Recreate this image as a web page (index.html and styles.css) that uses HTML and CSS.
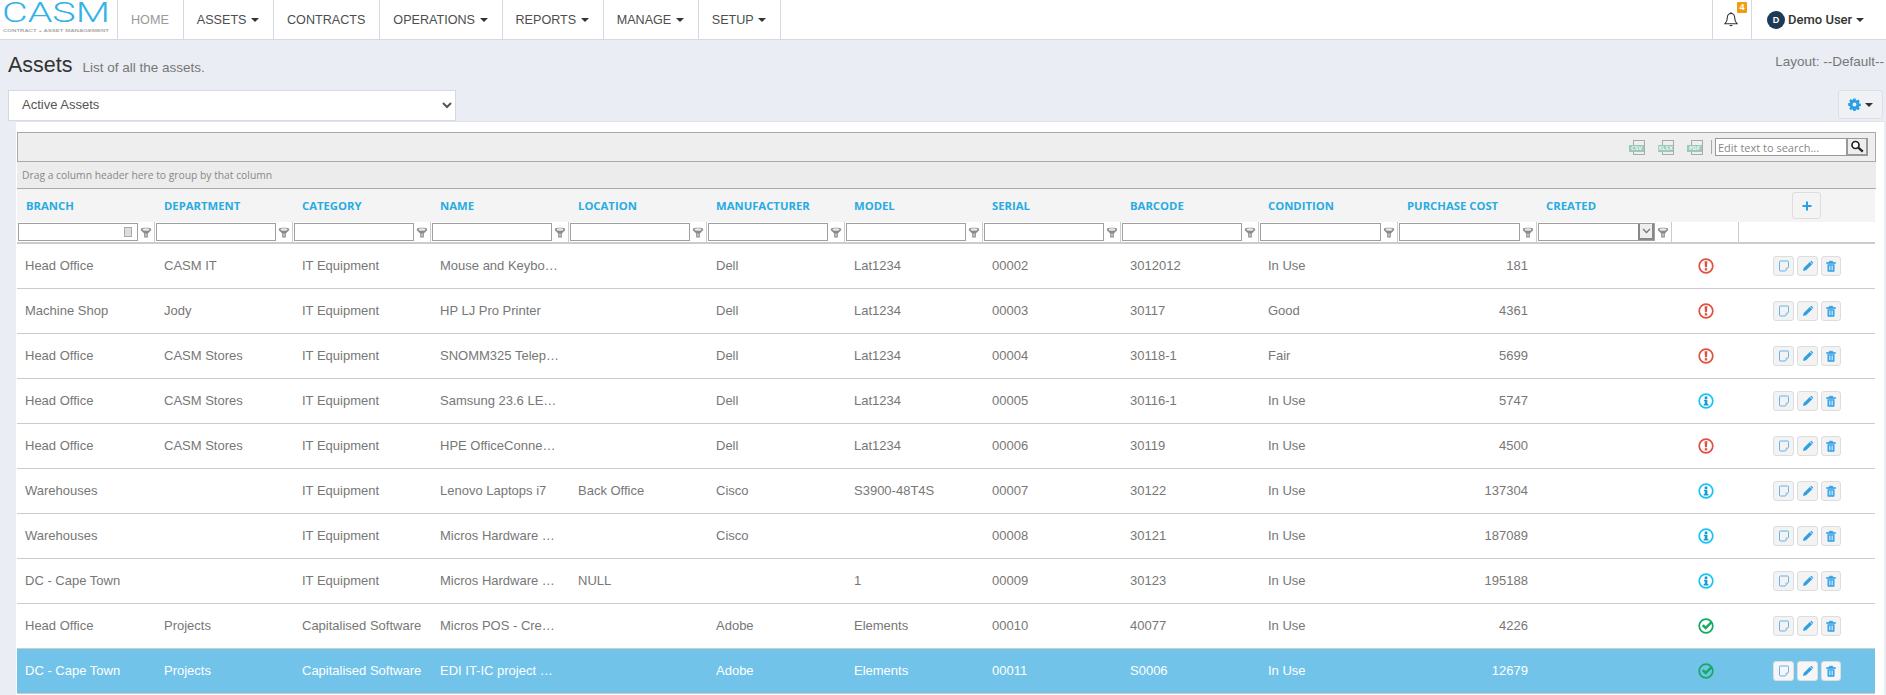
FILE: index.html
```html
<!DOCTYPE html>
<html lang="en">
<head>
<meta charset="utf-8">
<title>Assets</title>
<link rel="stylesheet" href="styles.css">
</head>
<body>
<svg class="defs" width="0" height="0" aria-hidden="true">
  <symbol id="i-note" viewBox="0 0 12 12"><path d="M1.500 2.200A1 1 0 0 1 2.500 1h7a1 1 0 0 1 1 1.200v5L7.400 11H2.500a1 1 0 0 1-1-1z" fill="none" stroke="currentColor" stroke-width="1"/><path d="M7.500 10.500V8.200A.7.7 0 0 1 8.200 7.500h2.200z" fill="#b5c9dd"/></symbol>
  <symbol id="i-pencil" viewBox="0 0 12 12"><path d="M1 11l.7-3L7.800 1.900l2.400 2.400L4 10.300z" fill="currentColor"/><path d="M8.500 1.200a1 1 0 0 1 1.400 0l1 1a1 1 0 0 1 0 1.400l-.2.200-2.400-2.400z" fill="currentColor"/></symbol>
  <symbol id="i-trash" viewBox="0 0 12 12"><path d="M1.500 2.500h9v1h-9zM4.300 2.500V1.200h3.400v1.300" fill="currentColor" stroke="currentColor" stroke-width=".6"/><path d="M2.500 4.200h7V11a.7.7 0 0 1-.7.700H3.200a.7.7 0 0 1-.7-.7z" fill="currentColor"/><path d="M4.400 5.500v4.800M6 5.500v4.800M7.600 5.500v4.800" stroke="#fff" stroke-width=".7"/></symbol>
  <symbol id="i-alert" viewBox="0 0 16 16"><circle cx="8" cy="8" r="6.800" fill="none" stroke="#e0503f" stroke-width="1.700"/><path d="M6.600 3.300h2.800l-.4 6H7z" fill="#e0503f"/><rect x="6.800" y="10.200" width="2.400" height="2.300" fill="#e0503f"/></symbol>
  <symbol id="i-info" viewBox="0 0 16 16"><circle cx="8" cy="8" r="6.800" fill="none" stroke="#18c5f2" stroke-width="1.700"/><circle cx="8" cy="4.700" r="1.500" fill="#1a9ad0"/><path d="M5.900 6.700h3.500V11h1v1.400H5.700V11h1V8.100h-.8z" fill="#1a9ad0"/></symbol>
  <symbol id="i-check" viewBox="0 0 16 16"><circle cx="8" cy="8" r="6.800" fill="none" stroke="#15aa62" stroke-width="1.700"/><path d="M3.800 8.100l1.900-1.800 2 2L12.400 3.600l1.700 1.700-6.400 6.500z" fill="#15aa62"/></symbol>
  <symbol id="i-funnel" viewBox="0 0 12 11"><path d="M.8 2C.8.300 11.200.300 11.200 2c0 1-.6 1.900-1.400 2.600L7.800 6.500V10.500H4.200V6.500L2.200 4.600C1.400 3.900.8 3 .8 2z" fill="#8a8a8a"/><ellipse cx="6" cy="2.500" rx="3.500" ry="1.300" fill="#e8e8e8"/><rect x="5.300" y="6.500" width="1.400" height="3" fill="#d0d0d0"/></symbol>
</svg>

<nav class="topbar">
  <a class="logo" href="#">
    <svg width="117" height="39" viewBox="0 0 117 39">
      <text class="logo-main" x="2" y="22" textLength="108" lengthAdjust="spacingAndGlyphs">CASM</text>
      <text class="logo-sub" x="3" y="31.500" textLength="106" lengthAdjust="spacingAndGlyphs">CONTRACT + ASSET MANAGEMENT</text>
    </svg>
  </a>
  <ul class="menu">
    <li class="menu-item muted">HOME</li>
    <li class="menu-item">ASSETS<i class="caret"></i></li>
    <li class="menu-item">CONTRACTS</li>
    <li class="menu-item">OPERATIONS<i class="caret"></i></li>
    <li class="menu-item">REPORTS<i class="caret"></i></li>
    <li class="menu-item">MANAGE<i class="caret"></i></li>
    <li class="menu-item">SETUP<i class="caret"></i></li>
  </ul>
  <div class="nav-right">
    <div class="bell-cell">
      <svg width="14" height="16" viewBox="0 0 14 16"><path d="M7 1.500c-2.600 0-3.700 2-3.700 4.200 0 3-1 4.800-2.300 6h12c-1.300-1.200-2.300-3-2.300-6C10.700 3.500 9.600 1.500 7 1.500z" fill="none" stroke="#333" stroke-width="1.100"/><path d="M5.300 13a1.800 1.800 0 0 0 3.400 0z" fill="#333"/><rect x="6.300" y=".3" width="1.400" height="1.500" fill="#333"/></svg>
      <span class="badge">4</span>
    </div>
    <div class="user-cell"><span class="avatar">D</span><span class="user-name">Demo User</span><i class="caret dark"></i></div>
  </div>
</nav>

<header class="page-head">
  <div class="title-row">
    <div><h1>Assets</h1><small>List of all the assets.</small></div>
    <div class="layout-name">Layout: --Default--</div>
  </div>
  <div class="filter-row">
    <select class="view-select"><option>Active Assets</option></select>
    <button class="gear-btn" type="button">
      <svg width="13" height="13" viewBox="0 0 14 14"><path fill="#2a9fe6" fill-rule="evenodd" d="M5.800.5h2.400l.3 1.700 1.100.5L11 1.700l1.700 1.700-1 1.400.5 1.100 1.700.3v2.400l-1.700.3-.5 1.100 1 1.400-1.700 1.700-1.400-1-1.100.5-.3 1.700H5.800l-.3-1.700-1.100-.5-1.400 1-1.700-1.700 1-1.400-.5-1.100L.1 8.100V5.700l1.700-.3.5-1.100-1-1.400L3 1.200l1.400 1 1.100-.5zM7 4.900a2.100 2.100 0 1 0 0 4.200 2.100 2.100 0 0 0 0-4.200z"/></svg>
      <i class="caret dark"></i>
    </button>
  </div>
</header>

<main class="panel">
  <section class="grid">
    <div class="grid-tools">
      <span class="export"><span class="export-label">CSV</span></span>
      <span class="export"><span class="export-label">XLSX</span></span>
      <span class="export"><span class="export-label">PDF</span></span>
      <span class="tool-sep"></span>
      <div class="search">
        <input type="text" placeholder="Edit text to search...">
        <span class="search-btn"><svg width="15" height="13" viewBox="0 0 15 13"><circle cx="5.500" cy="5" r="3.500" fill="#fff" stroke="#222" stroke-width="1.700"/><path d="M8.300 7.600l4.500 4" stroke="#222" stroke-width="2.200"/></svg></span>
      </div>
    </div>
    <div class="group-bar">Drag a column header here to group by that column</div>
    <table class="data">
      <colgroup>
        <col class="c138"><col class="c138"><col class="c138"><col class="c138"><col class="c138"><col class="c138"><col class="c138"><col class="c138"><col class="c138"><col class="c139">
        <col class="c139"><col class="c135"><col class="c67"><col class="c136">
      </colgroup>
      <thead>
        <tr class="head">
          <th>BRANCH</th><th>DEPARTMENT</th><th>CATEGORY</th><th>NAME</th><th>LOCATION</th><th>MANUFACTURER</th><th>MODEL</th><th>SERIAL</th><th>BARCODE</th><th>CONDITION</th><th>PURCHASE COST</th><th>CREATED</th><th></th>
          <th class="add-cell"><button class="add-btn" type="button"><svg width="10" height="10" viewBox="0 0 10 10"><path d="M4 .5h2v3.500h3.500v2H6v3.500H4V6H.5V4H4z" fill="#2a9fe6"/></svg></button></th>
        </tr>
        <tr class="filters">
          <td><div class="f"><div class="fi"><input type="text" aria-label="Branch"><span class="fi-num"></span></div><svg class="funnel"><use href="#i-funnel"/></svg></div></td>
          <td><div class="f"><div class="fi"><input type="text" aria-label="Department"></div><svg class="funnel"><use href="#i-funnel"/></svg></div></td>
          <td><div class="f"><div class="fi"><input type="text" aria-label="Category"></div><svg class="funnel"><use href="#i-funnel"/></svg></div></td>
          <td><div class="f"><div class="fi"><input type="text" aria-label="Name"></div><svg class="funnel"><use href="#i-funnel"/></svg></div></td>
          <td><div class="f"><div class="fi"><input type="text" aria-label="Location"></div><svg class="funnel"><use href="#i-funnel"/></svg></div></td>
          <td><div class="f"><div class="fi"><input type="text" aria-label="Manufacturer"></div><svg class="funnel"><use href="#i-funnel"/></svg></div></td>
          <td><div class="f"><div class="fi"><input type="text" aria-label="Model"></div><svg class="funnel"><use href="#i-funnel"/></svg></div></td>
          <td><div class="f"><div class="fi"><input type="text" aria-label="Serial"></div><svg class="funnel"><use href="#i-funnel"/></svg></div></td>
          <td><div class="f"><div class="fi"><input type="text" aria-label="Barcode"></div><svg class="funnel"><use href="#i-funnel"/></svg></div></td>
          <td><div class="f"><div class="fi"><input type="text" aria-label="Condition"></div><svg class="funnel"><use href="#i-funnel"/></svg></div></td>
          <td><div class="f"><div class="fi"><input type="text" aria-label="Purchase cost"></div><svg class="funnel"><use href="#i-funnel"/></svg></div></td>
          <td><div class="f"><div class="fi"><input type="text" aria-label="Created"><span class="fi-drop"><svg width="9" height="6" viewBox="0 0 9 6"><path d="M1 1l3.500 3.500L8 1" fill="none" stroke="#777" stroke-width="1.300"/></svg></span></div><svg class="funnel"><use href="#i-funnel"/></svg></div></td>
          <td></td><td class="last"></td>
        </tr>
      </thead>
      <tbody>
        <tr><td>Head Office</td><td>CASM IT</td><td>IT Equipment</td><td class="trunc">Mouse and Keyboard Combo</td><td></td><td>Dell</td><td>Lat1234</td><td>00002</td><td>3012012</td><td>In Use</td><td class="num">181</td><td></td><td class="st"><svg class="status"><use href="#i-alert"/></svg></td><td class="act"><div class="btns"><span class="b w"><svg class="note"><use href="#i-note"/></svg></span><span class="b w"><svg><use href="#i-pencil"/></svg></span><span class="b"><svg><use href="#i-trash"/></svg></span></div></td></tr>
        <tr><td>Machine Shop</td><td>Jody</td><td>IT Equipment</td><td class="trunc">HP LJ Pro Printer</td><td></td><td>Dell</td><td>Lat1234</td><td>00003</td><td>30117</td><td>Good</td><td class="num">4361</td><td></td><td class="st"><svg class="status"><use href="#i-alert"/></svg></td><td class="act"><div class="btns"><span class="b w"><svg class="note"><use href="#i-note"/></svg></span><span class="b w"><svg><use href="#i-pencil"/></svg></span><span class="b"><svg><use href="#i-trash"/></svg></span></div></td></tr>
        <tr><td>Head Office</td><td>CASM Stores</td><td>IT Equipment</td><td class="trunc">SNOMM325 Telephone Set</td><td></td><td>Dell</td><td>Lat1234</td><td>00004</td><td>30118-1</td><td>Fair</td><td class="num">5699</td><td></td><td class="st"><svg class="status"><use href="#i-alert"/></svg></td><td class="act"><div class="btns"><span class="b w"><svg class="note"><use href="#i-note"/></svg></span><span class="b w"><svg><use href="#i-pencil"/></svg></span><span class="b"><svg><use href="#i-trash"/></svg></span></div></td></tr>
        <tr><td>Head Office</td><td>CASM Stores</td><td>IT Equipment</td><td class="trunc">Samsung 23.6 LED Monitor</td><td></td><td>Dell</td><td>Lat1234</td><td>00005</td><td>30116-1</td><td>In Use</td><td class="num">5747</td><td></td><td class="st"><svg class="status"><use href="#i-info"/></svg></td><td class="act"><div class="btns"><span class="b w"><svg class="note"><use href="#i-note"/></svg></span><span class="b w"><svg><use href="#i-pencil"/></svg></span><span class="b"><svg><use href="#i-trash"/></svg></span></div></td></tr>
        <tr><td>Head Office</td><td>CASM Stores</td><td>IT Equipment</td><td class="trunc">HPE OfficeConnect Switch</td><td></td><td>Dell</td><td>Lat1234</td><td>00006</td><td>30119</td><td>In Use</td><td class="num">4500</td><td></td><td class="st"><svg class="status"><use href="#i-alert"/></svg></td><td class="act"><div class="btns"><span class="b w"><svg class="note"><use href="#i-note"/></svg></span><span class="b w"><svg><use href="#i-pencil"/></svg></span><span class="b"><svg><use href="#i-trash"/></svg></span></div></td></tr>
        <tr><td>Warehouses</td><td></td><td>IT Equipment</td><td class="trunc">Lenovo Laptops i7</td><td>Back Office</td><td>Cisco</td><td>S3900-48T4S</td><td>00007</td><td>30122</td><td>In Use</td><td class="num">137304</td><td></td><td class="st"><svg class="status"><use href="#i-info"/></svg></td><td class="act"><div class="btns"><span class="b w"><svg class="note"><use href="#i-note"/></svg></span><span class="b w"><svg><use href="#i-pencil"/></svg></span><span class="b"><svg><use href="#i-trash"/></svg></span></div></td></tr>
        <tr><td>Warehouses</td><td></td><td>IT Equipment</td><td class="trunc">Micros Hardware Server</td><td></td><td>Cisco</td><td></td><td>00008</td><td>30121</td><td>In Use</td><td class="num">187089</td><td></td><td class="st"><svg class="status"><use href="#i-info"/></svg></td><td class="act"><div class="btns"><span class="b w"><svg class="note"><use href="#i-note"/></svg></span><span class="b w"><svg><use href="#i-pencil"/></svg></span><span class="b"><svg><use href="#i-trash"/></svg></span></div></td></tr>
        <tr><td>DC - Cape Town</td><td></td><td>IT Equipment</td><td class="trunc">Micros Hardware Terminal</td><td>NULL</td><td></td><td>1</td><td>00009</td><td>30123</td><td>In Use</td><td class="num">195188</td><td></td><td class="st"><svg class="status"><use href="#i-info"/></svg></td><td class="act"><div class="btns"><span class="b w"><svg class="note"><use href="#i-note"/></svg></span><span class="b w"><svg><use href="#i-pencil"/></svg></span><span class="b"><svg><use href="#i-trash"/></svg></span></div></td></tr>
        <tr><td>Head Office</td><td>Projects</td><td>Capitalised Software</td><td class="trunc">Micros POS - Creative Cloud</td><td></td><td>Adobe</td><td>Elements</td><td>00010</td><td>40077</td><td>In Use</td><td class="num">4226</td><td></td><td class="st"><svg class="status"><use href="#i-check"/></svg></td><td class="act"><div class="btns"><span class="b w"><svg class="note"><use href="#i-note"/></svg></span><span class="b w"><svg><use href="#i-pencil"/></svg></span><span class="b"><svg><use href="#i-trash"/></svg></span></div></td></tr>
        <tr class="selected"><td>DC - Cape Town</td><td>Projects</td><td>Capitalised Software</td><td class="trunc">EDI IT-IC project software</td><td></td><td>Adobe</td><td>Elements</td><td>00011</td><td>S0006</td><td>In Use</td><td class="num">12679</td><td></td><td class="st"><svg class="status"><use href="#i-check"/></svg></td><td class="act"><div class="btns"><span class="b w"><svg class="note"><use href="#i-note"/></svg></span><span class="b w"><svg><use href="#i-pencil"/></svg></span><span class="b"><svg><use href="#i-trash"/></svg></span></div></td></tr>
      </tbody>
    </table>
  </section>
</main>
</body>
</html>
```

FILE: styles.css
```css
* { box-sizing: border-box; }
html, body { margin: 0; padding: 0; }
body {
  background: #eaedf3;
  color: #676a6c;
  font-family: "Liberation Sans", Arial, sans-serif;
  font-size: 13px;
  height: 695px;
  overflow: hidden;
}
.defs { position: absolute; }

/* top bar */
.topbar {
  display: flex;
  height: 40px;
  background: #fff;
  border-bottom: 1px solid #d5d9e3;
}
.logo {
  display: block;
  width: 118px;
  border-right: 1px solid #d5d9e3;
}
.logo svg { display: block; overflow: visible; }
.logo-main {
  font-family: "Roboto", sans-serif;
  font-weight: 300;
  font-size: 27px;
  fill: #35b2e6;
}
.logo-sub {
  font-family: "Liberation Sans", sans-serif;
  font-size: 3.600px;
  font-weight: 700;
  fill: #aaa;
}
.menu {
  display: flex;
  list-style: none;
  margin: 0;
  padding: 0;
}
.menu-item {
  display: flex;
  align-items: center;
  padding: 0 14px 0 13px;
  border-right: 1px solid #d5d9e3;
  color: #4d4d4d;
  font-size: 12.600px;
}
.menu-item.muted { color: #999; padding: 0 14px 0 13px; }
.caret {
  display: inline-block;
  margin-left: 4.500px;
  border-top: 4px solid #333;
  border-left: 4px solid transparent;
  border-right: 4px solid transparent;
  width: 0;
  height: 0;
}
.nav-right { display: flex; margin-left: auto; }
.bell-cell {
  position: relative;
  display: flex;
  align-items: center;
  justify-content: center;
  width: 40px;
  padding: 0 3px 0 0;
  border-left: 1px solid #d5d9e3;
  border-right: 1px solid #d5d9e3;
}
.badge {
  position: absolute;
  left: 24px;
  top: 2px;
  width: 10px;
  height: 11px;
  background: #f39c12;
  color: #fff;
  font-size: 9px;
  font-weight: 700;
  line-height: 11px;
  text-align: center;
  border-radius: 1px;
}
.user-cell {
  display: flex;
  align-items: center;
  width: 134px;
  padding-left: 15px;
}
.avatar {
  width: 18px;
  height: 18px;
  border-radius: 50%;
  background: #1e3a56;
  color: #fff;
  font-size: 9px;
  font-weight: 700;
  line-height: 18px;
  text-align: center;
  margin-right: 3px;
}
.user-name {
  color: #333;
  font-family: "Roboto", sans-serif;
  font-weight: 500;
  font-size: 13px;
}
.caret.dark { margin-left: 4px; }

/* page head */
.page-head { padding: 0 3px 0 8px; }
.title-row {
  display: flex;
  justify-content: space-between;
  height: 50px;
  padding-top: 13px;
}
h1 {
  display: inline;
  margin: 0;
  font-size: 21.500px;
  font-weight: 400;
  color: #333;
}
small {
  margin-left: 10px;
  font-size: 13.500px;
  color: #777;
}
.layout-name { margin-right: -1px; padding-top: 1px; color: #777; font-size: 13.500px; }
.filter-row {
  display: flex;
  justify-content: space-between;
  align-items: flex-start;
  height: 31px;
}
.view-select {
  width: 448px;
  height: 31px;
  padding: 0 0 2px 9px;
  background: #fff;
  border: 1px solid #d5d9e3;
  color: #555;
  font-family: "Liberation Sans", sans-serif;
  font-size: 13px;
}
.gear-btn {
  display: flex;
  align-items: center;
  justify-content: center;
  width: 45px;
  height: 29px;
  padding: 0;
  background: #eff1f5;
  border: 1px solid #dcdfe6;
  border-radius: 3px;
}

/* panel and grid */
.panel {
  margin: 0 2px 0 16px;
  padding: 10px 8px 0 1px;
  background: #fff;
  border-top: 1px solid #dfe2e8;
  height: 574px;
}
.grid { width: 1859px; }
.grid-tools {
  display: flex;
  align-items: center;
  justify-content: flex-end;
  height: 30px;
  padding-right: 7px;
  background: #eee;
  border: 1px solid #aaa;
}
.export {
  position: relative;
  display: block;
  width: 12px;
  height: 15px;
  margin: 0 6px 0 0;
  border: 1px solid #aaa;
}
.export + .export { margin-left: 11px; }
.export-label {
  position: absolute;
  left: -5px;
  top: 4px;
  width: 15px;
  height: 7px;
  background: #9ccab8;
  color: #eef7f3;
  font-family: "DejaVu Sans", sans-serif;
  font-size: 5px;
  font-weight: 700;
  line-height: 7px;
  text-align: center;
}
.tool-sep {
  width: 1px;
  height: 14px;
  margin: 0 3px 0 2px;
  background: #aaa;
}
.search {
  display: flex;
  width: 153px;
  height: 18px;
  background: #fff;
  border: 1px solid #999;
}
.search input {
  flex: 1;
  min-width: 0;
  padding: 0 2px;
  border: 0;
  outline: 0;
  font-family: "Open Sans", sans-serif;
  font-size: 11px;
}
.search input::placeholder { color: #888; opacity: 1; }
.search-btn {
  display: flex;
  align-items: center;
  justify-content: center;
  width: 21px;
  background: #eee;
  border-left: 2px solid #999;
  border-right: 1px solid #999;
  border-bottom: 1px solid #999;
}
.group-bar {
  height: 27px;
  padding-left: 5px;
  background: #ececec;
  border-bottom: 1px solid #aaa;
  color: #888;
  font-family: "Open Sans", sans-serif;
  font-size: 10.300px;
  line-height: 26px;
}

.data {
  table-layout: fixed;
  width: 1858px;
  border-collapse: separate;
  border-spacing: 0;
}
.c138 { width: 138px; }
.c139 { width: 139px; }
.c135 { width: 135px; }
.c67 { width: 67px; }
.c136 { width: 136px; }
.head th {
  height: 33px;
  padding: 0 0 0 9px;
  background: #f4f4f4;
  color: #29abe2;
  font-family: "Open Sans", sans-serif;
  font-size: 11.300px;
  font-weight: 700;
  text-align: left;
  white-space: nowrap;
}
.head th.add-cell { padding: 0 0 0 53px; }
.add-btn {
  display: flex;
  align-items: center;
  justify-content: center;
  width: 29px;
  height: 27px;
  padding: 0;
  background: #f4f4f4;
  border: 1px solid #ddd;
  border-radius: 3px;
}
.filters td {
  height: 22px;
  padding: 0;
  border-right: 1px solid #ccc;
  border-bottom: 2px solid #ccc;
}
.filters td.last { border-right: 0; }
.f {
  display: flex;
  align-items: center;
  gap: 2px;
  height: 20px;
  padding: 0 2px 0 1px;
}
.fi {
  display: flex;
  flex: 1;
  min-width: 0;
  height: 18px;
  background: #fff;
  border: 1px solid #a0a0a0;
}
.fi input {
  flex: 1;
  min-width: 0;
  padding: 0;
  border: 0;
  outline: 0;
}
.fi-num {
  align-self: center;
  width: 8px;
  height: 10px;
  margin-right: 5px;
  background: #ddd;
  border: 1px solid #aaa;
}
.fi-drop {
  display: flex;
  align-items: center;
  justify-content: center;
  width: 16px;
  background: #eee;
  border: 1px solid #888;
  border-width: 0 2px 2px 2px;
}
.funnel { width: 12px; height: 11px; flex: none; }

tbody td {
  height: 45px;
  padding: 0 2px 2px 9px;
  border-bottom: 1px solid #ccc;
  color: #777;
  white-space: nowrap;
  overflow: hidden;
  text-overflow: ellipsis;
}
tbody td:first-child { padding-left: 8px; }
td.trunc { padding-right: 10px; }
td.num { padding-right: 9px; text-align: right; }
td.st { padding: 0; text-align: center; }
td.act { padding: 0 0 0 34px; }
.status { display: block; width: 16px; height: 16px; margin: 0 auto; }
.btns { display: flex; gap: 3px; }
.b {
  display: flex;
  align-items: center;
  justify-content: center;
  width: 20px;
  height: 20px;
  background: #f3f3f3;
  border: 1px solid #ddd;
  border-radius: 3px;
  color: #2e9fe6;
}
.b.w { width: 21px; }
.b svg { width: 12px; height: 12px; }
.b svg.note { color: #62b3ee; }
.selected td {
  background: #71c3e9;
  color: #fff;
  border-bottom-color: #ccc;
}
.selected .b { background: #f6f6f6; }
```
